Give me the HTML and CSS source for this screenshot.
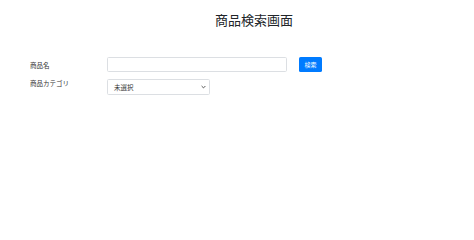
FILE: index.html
```html
<!DOCTYPE html>
<html lang="ja">
<head>
<meta charset="utf-8">
<title>商品検索画面</title>
<link rel="stylesheet" href="styles.css">
</head>
<body>
<main class="page">
  <h1 class="title">商品検索画面</h1>
  <form class="search-form">
    <div class="form-row">
      <label class="form-label label-name" for="name">商品名</label>
      <input class="text-input" id="name" type="text">
      <button class="btn-search" type="button">検索</button>
    </div>
    <div class="form-row form-row-top">
      <label class="form-label" for="category">商品カテゴリ</label>
      <div class="select-box" id="category">
        <span class="select-text">未選択</span>
        <svg class="select-arrow" width="5" height="4" viewBox="0 0 5 4"><path d="M0.6 1 L2.5 2.9 L4.4 1" fill="none" stroke="#444" stroke-width="0.9"/></svg>
      </div>
    </div>
  </form>
</main>
</body>
</html>
```

FILE: styles.css
```css
html, body {
  margin: 0;
  padding: 0;
  background: #ffffff;
}
body {
  font-family: "Noto Sans CJK JP", "Noto Sans", sans-serif;
  color: #212529;
}
.page {
  width: 474px;
  height: 232px;
  padding-top: 11px;
  box-sizing: border-box;
}
.title {
  margin: 0;
  padding-left: 34px;
  text-align: center;
  font-size: 13px;
  line-height: 18px;
  font-weight: 400;
  color: #212529;
}
.search-form {
  margin-top: 28px;
  padding-left: 30px;
}
.form-row {
  display: flex;
  align-items: center;
}
.form-row-top {
  margin-top: 7px;
  align-items: flex-start;
}
.form-label {
  width: 77px;
  font-size: 6.5px;
  line-height: 9px;
  color: #333;
}
.label-name {
  padding-top: 1px;
}
.text-input {
  box-sizing: border-box;
  width: 180px;
  height: 15px;
  margin: 0;
  padding: 0 3px;
  border: 1px solid #dcdfe3;
  border-radius: 1.6px;
  background: #fff;
  outline: none;
}
.btn-search {
  box-sizing: border-box;
  margin: 0 0 0 12px;
  width: 23px;
  height: 15px;
  padding: 0;
  border: none;
  border-radius: 1.6px;
  background: #007bff;
  color: #fff;
  font-family: "Noto Sans CJK JP", sans-serif;
  font-size: 6px;
  line-height: 15px;
}
.select-box {
  box-sizing: border-box;
  width: 103px;
  height: 16px;
  border: 1px solid #dcdfe3;
  border-radius: 1.6px;
  display: flex;
  align-items: center;
  justify-content: space-between;
  padding: 0 3px 0 6px;
}
.select-text {
  font-size: 6.5px;
  line-height: 9px;
  color: #333;
}
.select-arrow {
  display: block;
}
```
